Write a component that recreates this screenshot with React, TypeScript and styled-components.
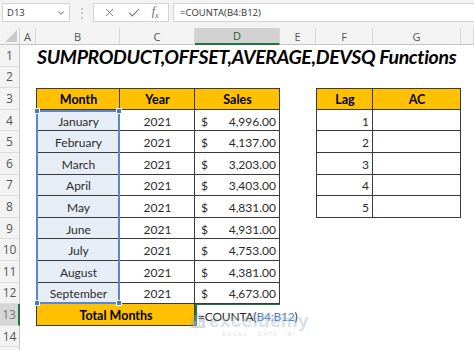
import styled, { createGlobalStyle, css } from "styled-components";
import { Fragment } from "react";
import { X, Check, ChevronDown } from "lucide-react";

const GlobalStyle = createGlobalStyle`
  html, body {
    margin: 0;
    padding: 0;
    background: #ffffff;
  }
  body {
    width: 474px;
    height: 350px;
    overflow: hidden;
    font-family: Lato, "Liberation Sans", sans-serif;
  }
`;

const Window = styled.div`
  position: relative;
  width: 474px;
  height: 350px;
  display: flex;
  flex-direction: column;
  overflow: hidden;
  background: #ffffff;
`;

/* ---------- formula bar ---------- */

const FormulaBar = styled.div`
  height: 28px;
  flex: none;
  display: flex;
  align-items: flex-start;
  padding: 3px 0 0 2px;
  box-sizing: border-box;
  background: #f3f3f3;
`;

const NameBox = styled.div`
  width: 68px;
  height: 19px;
  box-sizing: border-box;
  display: flex;
  align-items: center;
  justify-content: space-between;
  padding: 0 3px 0 4px;
  background: #fff;
  border: 1px solid #d4d4d4;
  font-family: "Open Sans", "Liberation Sans", sans-serif;
  font-size: 9.5px;
  color: #333;
`;

const Grip = styled.div`
  width: 23px;
  text-align: center;
  color: #b0b0b0;
  font-size: 12px;
  line-height: 19px;
`;

const ButtonBox = styled.div`
  width: 76px;
  height: 19px;
  box-sizing: border-box;
  display: flex;
  align-items: center;
  justify-content: space-around;
  padding: 0 4px;
  background: #fff;
  border: 1px solid #d4d4d4;
  color: #6a6a6a;
`;

const Fx = styled.span`
  font-family: "Liberation Serif", serif;
  font-style: italic;
  font-size: 12px;
  color: #666;
  sub {
    font-size: 8px;
  }
`;

const FormulaInput = styled.div`
  flex: 1;
  height: 19px;
  margin-left: 4px;
  box-sizing: border-box;
  display: flex;
  align-items: center;
  padding-left: 6px;
  background: #fff;
  border: 1px solid #d4d4d4;
  border-right: none;
  font-family: "Open Sans", "Liberation Sans", sans-serif;
  font-size: 9.5px;
  color: #333;
`;

/* ---------- sheet ---------- */

const Sheet = styled.div`
  display: grid;
  grid-template-columns: 20px 16px 84px 75px 85px 36px 57px 88px 13px;
  grid-template-rows: 17px repeat(15, 21.6px);
`;

const headerBase = css`
  display: flex;
  align-items: center;
  justify-content: center;
  box-sizing: border-box;
  background: #f3f3f3;
  font-family: "Open Sans", "Liberation Sans", sans-serif;
  font-size: 11px;
  color: #555;
`;

const Corner = styled.div`
  ${headerBase};
  grid-column: 1;
  grid-row: 1;
  position: relative;
  border-right: 1px solid #d0d0d0;
  border-bottom: 1px solid #c6c6c6;
  &::after {
    content: "";
    position: absolute;
    right: 2px;
    bottom: 2px;
    border-style: solid;
    border-width: 0 0 12px 12px;
    border-color: transparent transparent #c9c9c9 transparent;
  }
`;

const ColHeader = styled.div<{ $col: number; $active?: boolean }>`
  ${headerBase};
  grid-column: ${(p) => p.$col};
  grid-row: 1;
  border-right: 1px solid #d6d6d6;
  border-bottom: 1px solid #c6c6c6;
  ${(p) =>
    p.$active &&
    css`
      background: #d2d2d2;
      color: #1e5e3a;
      border-bottom: 2px solid #217346;
    `}
`;

const RowHeader = styled.div<{ $row: number; $active?: boolean }>`
  ${headerBase};
  grid-column: 1;
  grid-row: ${(p) => p.$row + 1};
  border-right: 1px solid #c6c6c6;
  border-bottom: 1px solid #dcdcdc;
  font-size: 12px;
  ${(p) =>
    p.$active &&
    css`
      background: #d6d6d6;
      color: #777;
      border-right: 2px solid #217346;
    `}
`;

const Title = styled.div`
  grid-column: 3 / span 7;
  grid-row: 2;
  display: flex;
  align-items: center;
  padding: 1px 0 0 1px;
  font-size: 19.5px;
  letter-spacing: -0.35px;
  font-weight: 700;
  font-style: italic;
  color: #000;
  white-space: nowrap;
`;

type CellProps = {
  $col: number;
  $row: number;
  $span?: number;
  $align?: "left" | "center" | "right" | "split";
  $fill?: string;
  $bold?: boolean;
  $top?: boolean;
  $left?: boolean;
};

const justify = {
  left: "flex-start",
  center: "center",
  right: "flex-end",
  split: "space-between",
};

const Cell = styled.div<CellProps>`
  grid-column: ${(p) => p.$col} / span ${(p) => p.$span ?? 1};
  grid-row: ${(p) => p.$row + 1};
  display: flex;
  align-items: center;
  justify-content: ${(p) => justify[p.$align ?? "center"]};
  box-sizing: border-box;
  padding: 2px 3px 0 4px;
  background: ${(p) => p.$fill ?? "#ffffff"};
  border-right: 1px solid #3a3a3a;
  border-bottom: 1px solid #3a3a3a;
  border-top: ${(p) => (p.$top ? "1px solid #3a3a3a" : "none")};
  border-left: ${(p) => (p.$left ? "1px solid #3a3a3a" : "none")};
  font-size: ${(p) => (p.$bold ? "12.5px" : "12px")};
  font-weight: ${(p) => (p.$bold ? 700 : 400)};
  color: ${(p) => (p.$bold ? "#000" : "#2b2b2b")};
  white-space: nowrap;
`;

const Dollar = styled.span`
  padding-left: 2px;
`;

const Selection = styled.div`
  grid-column: 3;
  grid-row: 5 / 14;
  position: relative;
  z-index: 2;
  box-sizing: border-box;
  border: 2px solid #5b87c9;
  pointer-events: none;
`;

const Handle = styled.span<{ $v: "top" | "bottom"; $h: "left" | "right" }>`
  position: absolute;
  width: 4px;
  height: 4px;
  background: #4a78c0;
  border: 1px solid #fff;
  ${(p) => p.$v}: -4px;
  ${(p) => p.$h}: -4px;
`;

const ActiveCell = styled.div`
  grid-column: 5;
  grid-row: 14;
  z-index: 2;
  display: flex;
  align-items: center;
  padding: 2px 0 0 1px;
  box-sizing: border-box;
  border-top: 1px solid #217346;
  border-left: 2px solid #217346;
  font-size: 12px;
  letter-spacing: -0.2px;
  color: #2b2b2b;
  white-space: nowrap;
  overflow: visible;
`;

const Ref = styled.span`
  color: #4e7fc6;
`;

/* ---------- watermark ---------- */

const Watermark = styled.div`
  position: absolute;
  left: 190px;
  top: 311px;
  display: flex;
  align-items: flex-start;
  gap: 3px;
  opacity: 0.4;
  pointer-events: none;
  z-index: 5;
`;

const WatermarkText = styled.div`
  display: flex;
  flex-direction: column;
  align-items: center;
  font-family: "Liberation Sans", sans-serif;
  color: #9fb2c8;
`;

const Brand = styled.span`
  font-size: 19px;
  font-weight: 700;
  line-height: 20px;
  letter-spacing: 0.3px;
`;

const Tagline = styled.span`
  font-size: 5.5px;
  letter-spacing: 1.6px;
  color: #aab6c4;
`;

const sales: [string, number][] = [
  ["January", 4996],
  ["February", 4137],
  ["March", 3203],
  ["April", 3403],
  ["May", 4831],
  ["June", 4931],
  ["July", 4753],
  ["August", 4381],
  ["September", 4673],
];

const letters = ["A", "B", "C", "D", "E", "F", "G", ""];
const yellow = "#ffc000";
const blueFill = "#e7edf7";

export default function App() {
  return (
    <Window>
      <GlobalStyle />
      <FormulaBar>
        <NameBox>
          D13
          <ChevronDown size={10} color="#777" strokeWidth={2.5} />
        </NameBox>
        <Grip>⋮</Grip>
        <ButtonBox>
          <X size={13} strokeWidth={1.6} />
          <Check size={14} strokeWidth={1.8} />
          <Fx>
            f<sub>x</sub>
          </Fx>
        </ButtonBox>
        <FormulaInput>=COUNTA(B4:B12)</FormulaInput>
      </FormulaBar>

      <Sheet>
        <Corner />
        {letters.map((l, i) => (
          <ColHeader key={i} $col={i + 2} $active={l === "D"}>
            {l}
          </ColHeader>
        ))}
        {Array.from({ length: 15 }, (_, i) => (
          <RowHeader key={i} $row={i + 1} $active={i + 1 === 13}>
            {i < 14 ? i + 1 : ""}
          </RowHeader>
        ))}

        <Title>SUMPRODUCT,OFFSET,AVERAGE,DEVSQ Functions</Title>

        {/* main table */}
        <Cell $col={3} $row={3} $fill={yellow} $bold $top $left>
          Month
        </Cell>
        <Cell $col={4} $row={3} $fill={yellow} $bold $top>
          Year
        </Cell>
        <Cell $col={5} $row={3} $fill={yellow} $bold $top>
          Sales
        </Cell>
        {sales.map(([month, value], i) => (
          <Fragment key={month}>
            <Cell $col={3} $row={i + 4} $fill={blueFill} $left>
              {month}
            </Cell>
            <Cell $col={4} $row={i + 4}>
              2021
            </Cell>
            <Cell $col={5} $row={i + 4} $align="split">
              <Dollar>$</Dollar>
              {value.toLocaleString("en-US", { minimumFractionDigits: 2 })}
            </Cell>
          </Fragment>
        ))}
        <Cell $col={3} $row={13} $span={2} $fill={yellow} $bold $left>
          Total Months
        </Cell>
        <Selection>
          <Handle $v="top" $h="left" />
          <Handle $v="top" $h="right" />
          <Handle $v="bottom" $h="left" />
          <Handle $v="bottom" $h="right" />
        </Selection>
        <ActiveCell>
          =COUNTA(<Ref>B4:B12</Ref>)
        </ActiveCell>

        {/* lag table */}
        <Cell $col={7} $row={3} $fill={yellow} $bold $top $left>
          Lag
        </Cell>
        <Cell $col={8} $row={3} $fill={yellow} $bold $top>
          AC
        </Cell>
        {[1, 2, 3, 4, 5].map((n) => (
          <Fragment key={n}>
            <Cell $col={7} $row={n + 3} $align="right" $left>
              {n}
            </Cell>
            <Cell $col={8} $row={n + 3} />
          </Fragment>
        ))}
      </Sheet>

      <Watermark>
        <svg width="16" height="18" viewBox="0 0 16 18">
          <path d="M1 8 L8 2 L15 8 L15 17 L1 17 Z" fill="#8fa6c2" />
          <rect x="4" y="10" width="2" height="5" fill="#fff" />
          <rect x="7" y="8" width="2" height="7" fill="#fff" />
          <rect x="10" y="11" width="2" height="4" fill="#fff" />
        </svg>
        <WatermarkText>
          <Brand>exceldemy</Brand>
          <Tagline>EXCEL · DATA · BI</Tagline>
        </WatermarkText>
      </Watermark>
    </Window>
  );
}
